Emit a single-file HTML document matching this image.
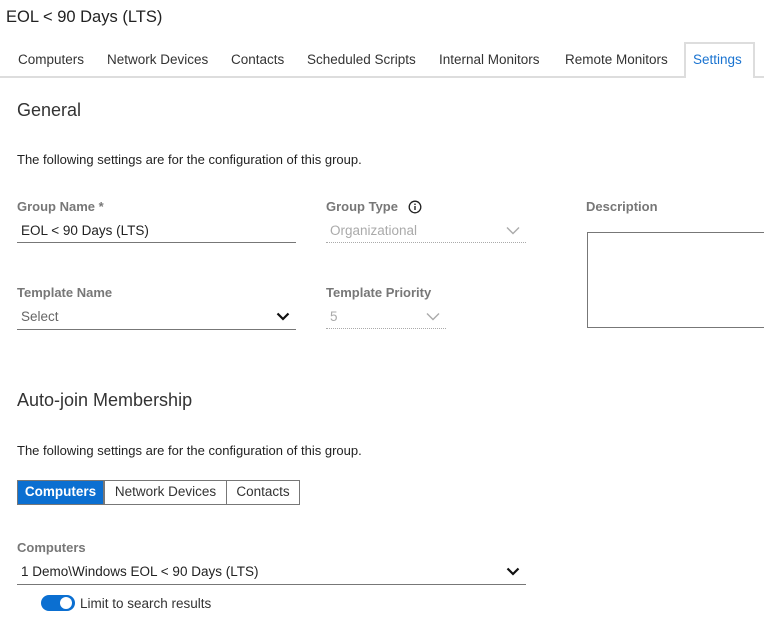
<!DOCTYPE html>
<html><head><style>
*{box-sizing:border-box;margin:0;padding:0}
body{width:764px;height:628px;background:#fff;font-family:"Liberation Sans",sans-serif;color:#222;position:relative;overflow:hidden}
.a{position:absolute;white-space:nowrap}
.lab{font-size:13px;font-weight:bold;color:#777}
.val{font-size:13.5px;color:#222}
.ul{position:absolute;height:1px;background:#777}
.dl{position:absolute;height:0;border-top:1px dotted #aaa}
.tab{position:absolute;top:52px;font-size:13.5px;color:#333}
</style></head><body>
<div class="a" style="left:6px;top:8px;font-size:16.5px;color:#222">EOL &lt; 90 Days (LTS)</div>
<div style="position:absolute;left:0;top:76px;width:764px;height:2px;background:#ddd"></div>
<div style="position:absolute;left:684px;top:42px;width:71px;height:36px;border:2px solid #ddd;border-bottom:none;background:#fff"></div>
<div class="tab" style="left:18px">Computers</div>
<div class="tab" style="left:107px">Network Devices</div>
<div class="tab" style="left:231px">Contacts</div>
<div class="tab" style="left:307px">Scheduled Scripts</div>
<div class="tab" style="left:439px">Internal Monitors</div>
<div class="tab" style="left:565px">Remote Monitors</div>
<div class="tab" style="left:693px;color:#1a73d0">Settings</div>
<div class="a" style="left:17px;top:100px;font-size:18px;color:#333">General</div>
<div class="a" style="left:17px;top:152px;font-size:13px">The following settings are for the configuration of this group.</div>
<div class="a lab" style="left:17px;top:199px">Group Name *</div>
<div class="a val" style="left:21px;top:223px">EOL &lt; 90 Days (LTS)</div>
<div class="ul" style="left:17px;top:242px;width:279px"></div>
<div class="a lab" style="left:326px;top:199px">Group Type</div>
<svg class="a" style="left:408px;top:200px" width="14" height="14" viewBox="0 0 14 14"><circle cx="7" cy="7" r="5.8" fill="none" stroke="#222" stroke-width="1.3"/><rect x="6.3" y="6" width="1.4" height="4" fill="#222"/><rect x="6.3" y="3.6" width="1.4" height="1.4" fill="#222"/></svg>
<div class="a val" style="left:330px;top:223px;color:#aaa">Organizational</div>
<svg class="a" style="left:506px;top:226px" width="14" height="9"><path d="M1 1.5L7 7.5L13 1.5" fill="none" stroke="#aaa" stroke-width="1.4"/></svg>
<div class="dl" style="left:326px;top:242px;width:200px"></div>
<div class="a lab" style="left:586px;top:199px">Description</div>
<div style="position:absolute;left:587px;top:232px;width:190px;height:96px;border:1px solid #777"></div>
<div class="a lab" style="left:17px;top:285px">Template Name</div>
<div class="a val" style="left:21px;top:309px;color:#666">Select</div>
<svg class="a" style="left:276px;top:312px" width="14" height="9"><path d="M1.5 1.5L7 7L12.5 1.5" fill="none" stroke="#111" stroke-width="2.2"/></svg>
<div class="ul" style="left:17px;top:329px;width:279px"></div>
<div class="a lab" style="left:326px;top:285px">Template Priority</div>
<div class="a val" style="left:330px;top:309px;color:#aaa">5</div>
<svg class="a" style="left:426px;top:312px" width="14" height="9"><path d="M1 1.5L7 7.5L13 1.5" fill="none" stroke="#aaa" stroke-width="1.4"/></svg>
<div class="dl" style="left:326px;top:328px;width:120px"></div>
<div class="a" style="left:17px;top:390px;font-size:18px;color:#333">Auto-join Membership</div>
<div class="a" style="left:17px;top:443px;font-size:13px">The following settings are for the configuration of this group.</div>
<div style="position:absolute;left:17px;top:480px;width:87px;height:25px;background:#0b6fd1;border:1px solid #777;color:#fff;font-size:13.5px;font-weight:bold;text-align:center;line-height:22px">Computers</div>
<div style="position:absolute;left:104px;top:480px;width:123px;height:25px;border:1px solid #777;font-size:13.5px;text-align:center;line-height:22px;color:#333">Network Devices</div>
<div style="position:absolute;left:226px;top:480px;width:74px;height:25px;border:1px solid #777;font-size:13.5px;text-align:center;line-height:22px;color:#333">Contacts</div>
<div class="a lab" style="left:17px;top:540px">Computers</div>
<div class="a val" style="left:21px;top:564px">1 Demo\Windows EOL &lt; 90 Days (LTS)</div>
<svg class="a" style="left:506px;top:567px" width="14" height="9"><path d="M1.5 1.5L7 7L12.5 1.5" fill="none" stroke="#111" stroke-width="2.2"/></svg>
<div class="ul" style="left:17px;top:584px;width:509px"></div>
<div style="position:absolute;left:41px;top:595px;width:34px;height:16px;border-radius:8px;background:#0b6fd1"></div>
<div style="position:absolute;left:60px;top:597px;width:12px;height:12px;border-radius:6px;background:#fff"></div>
<div class="a" style="left:80px;top:596px;font-size:13.5px;color:#333">Limit to search results</div>
</body></html>
